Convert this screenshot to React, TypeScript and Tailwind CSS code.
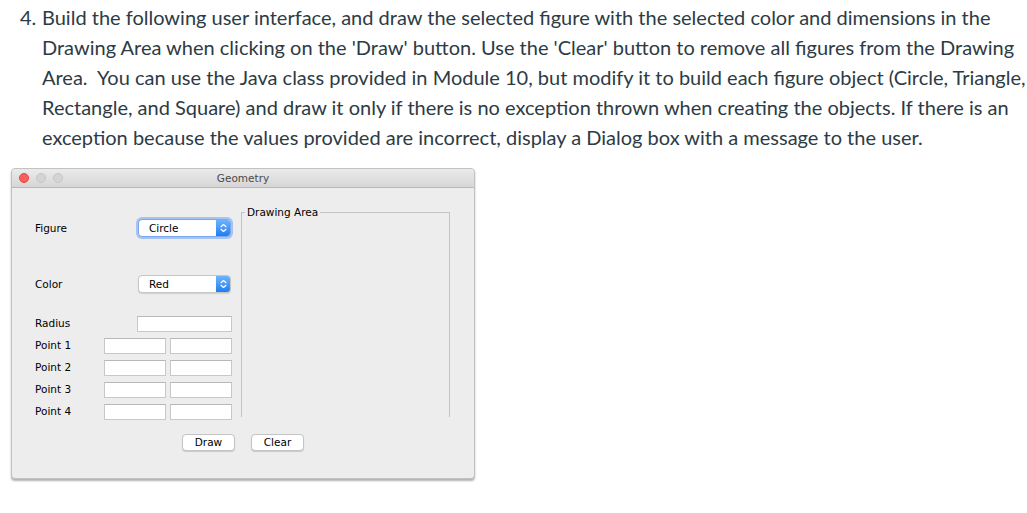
import React from 'react';

const lines = [
  "Drawing Area when clicking on the 'Draw' button. Use the 'Clear' button to remove all figures from the Drawing",
  'Area.  You can use the Java class provided in Module 10, but modify it to build each figure object (Circle, Triangle,',
  'Rectangle, and Square) and draw it only if there is no exception thrown when creating the objects. If there is an',
  'exception because the values provided are incorrect, display a Dialog box with a message to the user.',
];

function Select({ value, focused }: { value: string; focused?: boolean }) {
  return (
    <div
      className={`flex h-[18px] w-[93px] rounded-[4px] border bg-white ${
        focused ? 'border-[#7aa7ea] shadow-[0_0_0_2px_rgba(110,160,240,0.55)]' : 'border-[#c6c6c6] shadow-[0_1px_1px_rgba(0,0,0,0.12)]'
      }`}
    >
      <span className="flex-1 pl-[10px] text-[10.5px] leading-[16px] text-black">{value}</span>
      <span className="flex w-[14px] items-center justify-center rounded-r-[3px] bg-gradient-to-b from-[#6cb3fa] to-[#1b7df3]">
        <svg width="7" height="10" viewBox="0 0 7 10" fill="none" stroke="white" strokeWidth="1.2" strokeLinecap="round" strokeLinejoin="round">
          <path d="M1 3.7 L3.5 1.5 L6 3.7" />
          <path d="M1 6.3 L3.5 8.5 L6 6.3" />
        </svg>
      </span>
    </div>
  );
}

function Field({ w }: { w: string }) {
  return <div className={`h-[16px] ${w} border border-[#c8c8c8] border-t-[#b8b8b8] bg-white`} />;
}

function Btn({ label }: { label: string }) {
  return (
    <div className="flex h-[17px] w-[53px] items-center justify-center rounded-[4px] border border-[#c4c4c4] bg-white text-[10.5px] text-black shadow-[0_1px_1px_rgba(0,0,0,0.15)]">
      {label}
    </div>
  );
}

export default function App() {
  const ui = { fontFamily: '"DejaVu Sans", "Liberation Sans", sans-serif' };
  const points = ['Point 1', 'Point 2', 'Point 3', 'Point 4'];

  return (
    <div className="h-[513px] w-[1027px] overflow-hidden bg-white">
      <div
        className="pt-[2px] text-[20px] leading-[30px] text-[#2d3b45]"
        style={{ fontFamily: 'Lato, "Open Sans", sans-serif' }}
      >
        <div className="flex whitespace-nowrap">
          <span className="w-[42px] pl-[20px]">4.</span>
          <span>Build the following user interface, and draw the selected figure with the selected color and dimensions in the</span>
        </div>
        {lines.map((l) => (
          <div key={l} className="whitespace-pre pl-[42px]">
            {l}
          </div>
        ))}
      </div>

      <div
        className="ml-[11px] mt-[16px] h-[311px] w-[464px] rounded-[4px] border border-[#c2c2c2] bg-[#ededed] shadow-[0_2px_2px_rgba(0,0,0,0.3)]"
        style={ui}
      >
        {/* title bar */}
        <div className="flex h-[19px] items-center rounded-t-[4px] border-b border-[#b9b9b9] bg-gradient-to-b from-[#ebebeb] to-[#d6d6d6] pl-[7px]">
          <div className="flex gap-[7px]">
            <span className="h-[10px] w-[10px] rounded-full border border-[#e0443e] bg-[#fc605c]" />
            <span className="h-[10px] w-[10px] rounded-full border border-[#c6c6c6] bg-[#d4d4d4]" />
            <span className="h-[10px] w-[10px] rounded-full border border-[#c6c6c6] bg-[#d4d4d4]" />
          </div>
          <span className="flex-1 pr-[51px] pt-[1px] text-center text-[10.5px] text-[#4a4a4a]">Geometry</span>
        </div>

        <div className="flex pl-[23px]">
          {/* left form */}
          <div className="flex w-[197px] flex-col pt-[31px] text-[10.5px] text-black">
            <div className="flex h-[18px] items-center">
              <span className="w-[103px] pt-[2px]">Figure</span>
              <Select value="Circle" focused />
            </div>
            <div className="mt-[38px] flex h-[18px] items-center">
              <span className="w-[103px] pt-[1px]">Color</span>
              <Select value="Red" />
            </div>
            <div className="mt-[23px] flex h-[16px] items-center">
              <span className="w-[102px]">Radius</span>
              <Field w="w-[95px]" />
            </div>
            {points.map((p) => (
              <div key={p} className="mt-[6px] flex h-[16px] items-center">
                <span className="w-[69px]">{p}</span>
                <Field w="w-[62px]" />
                <div className="w-[4px]" />
                <Field w="w-[62px]" />
              </div>
            ))}
          </div>

          {/* drawing area */}
          <fieldset className="ml-[9px] mt-[18px] h-[211px] w-[209px] border-x border-t border-[#c3c3c3]">
            <legend className="ml-[3px] px-[2px] text-[10.5px] leading-[13px] text-black">Drawing Area</legend>
          </fieldset>
        </div>

        <div className="mt-[14px] flex justify-center gap-[16px]">
          <Btn label="Draw" />
          <Btn label="Clear" />
        </div>
      </div>
    </div>
  );
}
